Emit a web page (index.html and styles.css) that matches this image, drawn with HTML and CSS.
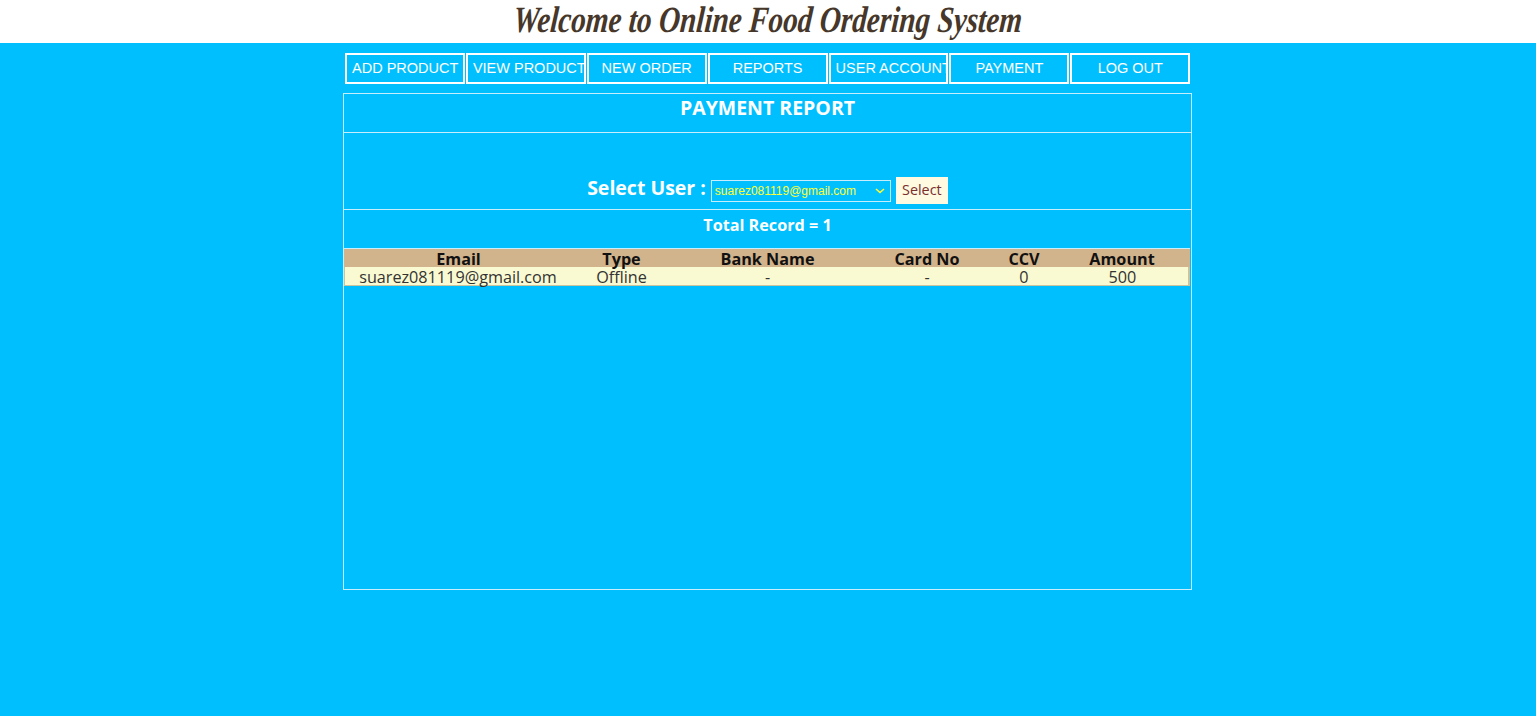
FILE: index.html
```html
<!DOCTYPE html>
<html>
    <head>
      <meta charset="utf-8">
      <title>Payment Report</title>
      <link rel="stylesheet" href="styles.css">
    </head>
    <body>
        <div class="header"><span class="header-text">Welcome to Online Food Ordering System</span></div>
        <div class="nav">
            <a class="nav-item">ADD PRODUCT</a>
            <a class="nav-item">VIEW PRODUCT</a>
            <a class="nav-item">NEW ORDER</a>
            <a class="nav-item">REPORTS</a>
            <a class="nav-item">USER ACCOUNT</a>
            <a class="nav-item">PAYMENT</a>
            <a class="nav-item">LOG OUT</a>
        </div>
        <div class="panel">
            <div class="panel-title">PAYMENT REPORT</div>
            <div class="panel-filter">
                <span class="filter-label">Select User :</span>
                <select class="filter-select">
                    <option>suarez081119@gmail.com</option>
                </select>
                <button class="filter-btn">Select</button>
            </div>
            <div class="panel-total">Total Record = 1</div>
            <table class="report">
                <tr class="report-head">
                    <th class="col-email">Email</th>
                    <th class="col-type">Type</th>
                    <th class="col-bank">Bank Name</th>
                    <th class="col-card">Card No</th>
                    <th class="col-ccv">CCV</th>
                    <th class="col-amount">Amount</th>
                </tr>
                <tr class="report-row">
                    <td>suarez081119@gmail.com</td>
                    <td>Offline</td>
                    <td>-</td>
                    <td>-</td>
                    <td>0</td>
                    <td>500</td>
                </tr>
            </table>
        </div>
    </body>
</html>
```

FILE: styles.css
```css
html,body{
    margin: 0;
    padding: 0;
}
body{
    background: #00bfff;
    height: 716px;
    overflow: hidden;
    font-family: "Open Sans", "Noto Sans", sans-serif;
    color: #fff;
}
.header{
    background: #fff;
    height: 43px;
    line-height: 40px;
    text-align: center;
    overflow: hidden;
}
/*no script font here, so squeeze a serif italic to the same width*/
.header-text{
    display: inline-block;
    transform: scaleX(0.79) skewX(-6deg);
    font-family: "Liberation Serif", serif;
    font-style: italic;
    font-weight: bold;
    font-size: 37px;
    color: #46372a;
    white-space: nowrap;
}
.nav{
    display: flex;
    gap: 1px;
    width: 846px;
    margin: 10px 0 0 345px;
}
.nav-item{
    box-sizing: border-box;
    flex: 0 0 119.9px;
    height: 31px;
    border: 2px solid #fff;
    padding: 0 5px;
    overflow: hidden;
    white-space: nowrap;
    text-align: center;
    line-height: 26px;
    font-family: "Liberation Sans", Arial, sans-serif;
    font-size: 14.5px;
    color: #fff;
}
.panel{
    box-sizing: border-box;
    width: 849px;
    height: 497px;
    margin: 9px 0 0 343px;
    border: 1px solid #c6eefc;
}
.panel-title{
    height: 38px;
    line-height: 28px;
    text-align: center;
    font-size: 19.5px;
    font-weight: bold;
    border-bottom: 1px solid #c6eefc;
}
.panel-filter{
    box-sizing: border-box;
    height: 77px;
    border-bottom: 1px solid #c6eefc;
    display: flex;
    justify-content: center;
    align-items: flex-end;
    gap: 5px;
    padding: 0 0 5px;
}
.filter-label{
    font-size: 19.5px;
    font-weight: bold;
    line-height: 30px;
    margin-bottom: 1px;
}
.filter-select{
    box-sizing: border-box;
    width: 180px;
    height: 22px;
    margin-bottom: 2px;
    padding: 0 0 0 3px;
    appearance: none;
    background: #00bfff url("data:image/svg+xml,%3Csvg xmlns='http://www.w3.org/2000/svg' width='10' height='6'%3E%3Cpath d='M1 1l4 3.5L9 1' fill='none' stroke='%23ffff33' stroke-width='1.6'/%3E%3C/svg%3E") no-repeat right 5px center;
    border: 1px solid #c6eefc;
    border-radius: 0;
    color: #ffff33;
    font-family: "Liberation Sans", Arial, sans-serif;
    font-size: 12px;
}
.filter-btn{
    box-sizing: border-box;
    width: 52px;
    height: 27px;
    padding: 0 0 2px;
    border: 0;
    background: #fffae0;
    color: #7a2e2e;
    font-family: "Open Sans", sans-serif;
    font-size: 14.4px;
}
.panel-total{
    height: 38px;
    line-height: 31px;
    text-align: center;
    font-size: 16.2px;
    font-weight: bold;
}
.report{
    width: 846px;
    border-collapse: separate;
    border-spacing: 0;
    table-layout: fixed;
    font-size: 16.2px;
    color: #333;
}
.report th,.report td{
    box-sizing: border-box;
    padding: 2px 0 0;
    text-align: center;
    font-weight: normal;
    line-height: 16px;
}
.report-head th{
    background: #d2b48c;
    color: #111;
    font-weight: bold;
    border-top: 1px solid #c6eefc;
}
.report-row td{
    background: #fafad2;
    border-bottom: 1px solid #c9c4a0;
}
.report-row td:first-child{
    border-left: 1px solid #c9c4a0;
    padding-right: 2px;
}
.report-row td:last-child{
    border-right: 2px solid #c9c4a0;
    padding-right: 2px;
}
.report .col-amount{
    padding-right: 5px;
}
.col-email{ width: 229px; }
.col-type{ width: 97px; }
.col-bank{ width: 195px; }
.col-card{ width: 124px; }
.col-ccv{ width: 70px; }
.col-amount{ width: 131px; }
```
